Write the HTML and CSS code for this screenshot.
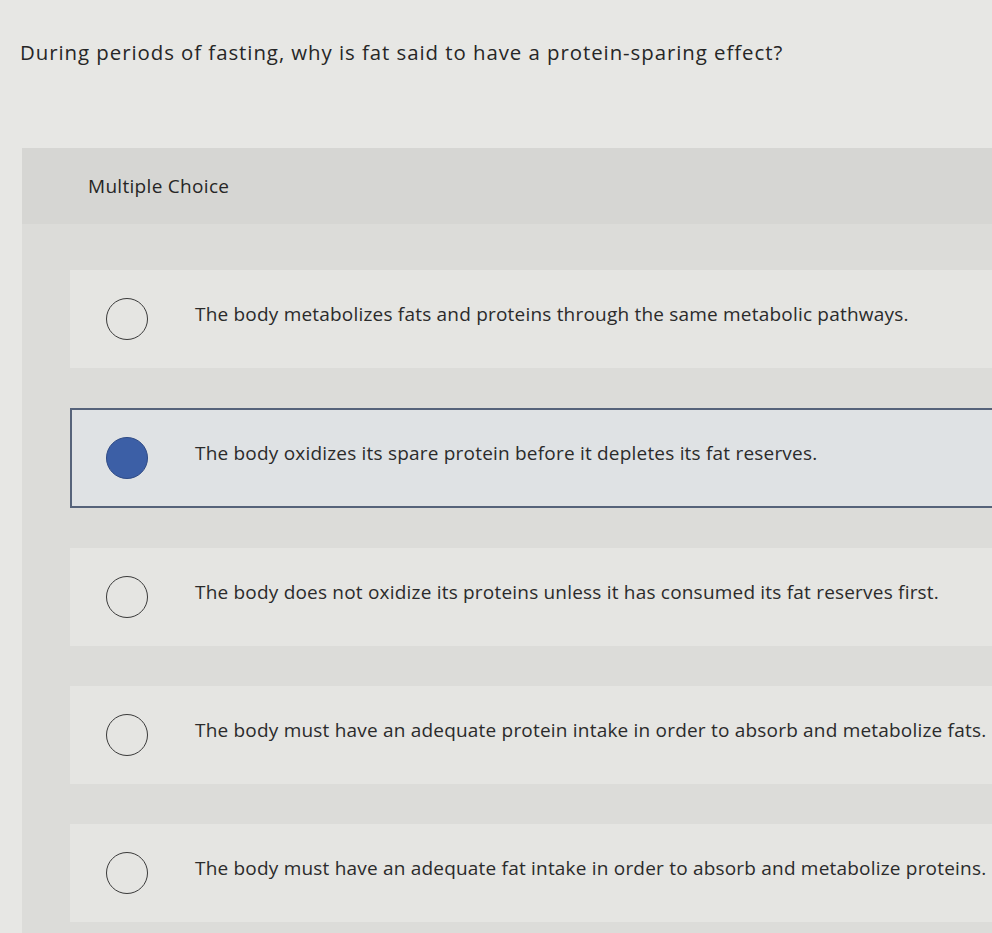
FILE: index.html
```html
<!DOCTYPE html>
<html lang="en">
<head>
<meta charset="utf-8">
<title>Multiple Choice</title>
<link rel="stylesheet" href="styles.css">
</head>
<body>
  <main class="page">
    <h1 class="question">During periods of fasting, why is fat said to have a protein-sparing effect?</h1>
    <section class="panel">
      <header class="panel-head">Multiple Choice</header>
      <ul class="options">
        <li class="option">
          <span class="radio"></span>
          <span class="label">The body metabolizes fats and proteins through the same metabolic pathways.</span>
        </li>
        <li class="option selected">
          <span class="radio"></span>
          <span class="label">The body oxidizes its spare protein before it depletes its fat reserves.</span>
        </li>
        <li class="option">
          <span class="radio"></span>
          <span class="label">The body does not oxidize its proteins unless it has consumed its fat reserves first.</span>
        </li>
        <li class="option">
          <span class="radio"></span>
          <span class="label">The body must have an adequate protein intake in order to absorb and metabolize fats.</span>
        </li>
        <li class="option">
          <span class="radio"></span>
          <span class="label">The body must have an adequate fat intake in order to absorb and metabolize proteins.</span>
        </li>
      </ul>
    </section>
  </main>
</body>
</html>
```
FILE: styles.css
```css
html, body {
  margin: 0;
  padding: 0;
}
body {
  background: #e7e7e4;
  font-family: "Open Sans", "Liberation Sans", sans-serif;
  color: #2b2b2b;
  height: 933px;
  overflow: hidden;
}
.page {
  display: flex;
  flex-direction: column;
  height: 933px;
}
.question {
  margin: 0;
  padding: 38px 0 0 20px;
  height: 148px;
  flex: none;
  box-sizing: border-box;
  font-size: 20.4px;
  font-weight: 500;
  line-height: 28px;
  letter-spacing: 0.95px;
  color: #262626;
}
.panel {
  margin-left: 22px;
  background: #dcdcd9;
  display: flex;
  flex-direction: column;
  flex: 1;
}
.panel-head {
  background: #d6d6d3;
  height: 76px;
  display: flex;
  align-items: center;
  padding-left: 66px;
  font-size: 19px;
  letter-spacing: 0.3px;
  color: #262626;
}
.options {
  list-style: none;
  margin: 0;
  padding: 46px 0 0 48px;
  display: flex;
  flex-direction: column;
  gap: 40px;
}
.option {
  background: #e5e5e2;
  height: 98px;
  display: flex;
  align-items: center;
  padding-left: 36px;
  box-sizing: border-box;
}
.option.selected {
  background: #dfe2e4;
  border: 2px solid #56637a;
  border-right: none;
  padding-left: 34px;
  height: 100px;
}
.radio {
  width: 42px;
  height: 42px;
  border: 1.6px solid #3a3a3a;
  border-radius: 50%;
  flex: none;
  box-sizing: border-box;
}
.option.selected .radio {
  background: #3c5fa6;
  border-color: #2e4a85;
}
.label {
  margin-left: 47px;
  font-size: 19px;
  letter-spacing: 0.2px;
  white-space: nowrap;
  margin-top: -10px;
}
```
